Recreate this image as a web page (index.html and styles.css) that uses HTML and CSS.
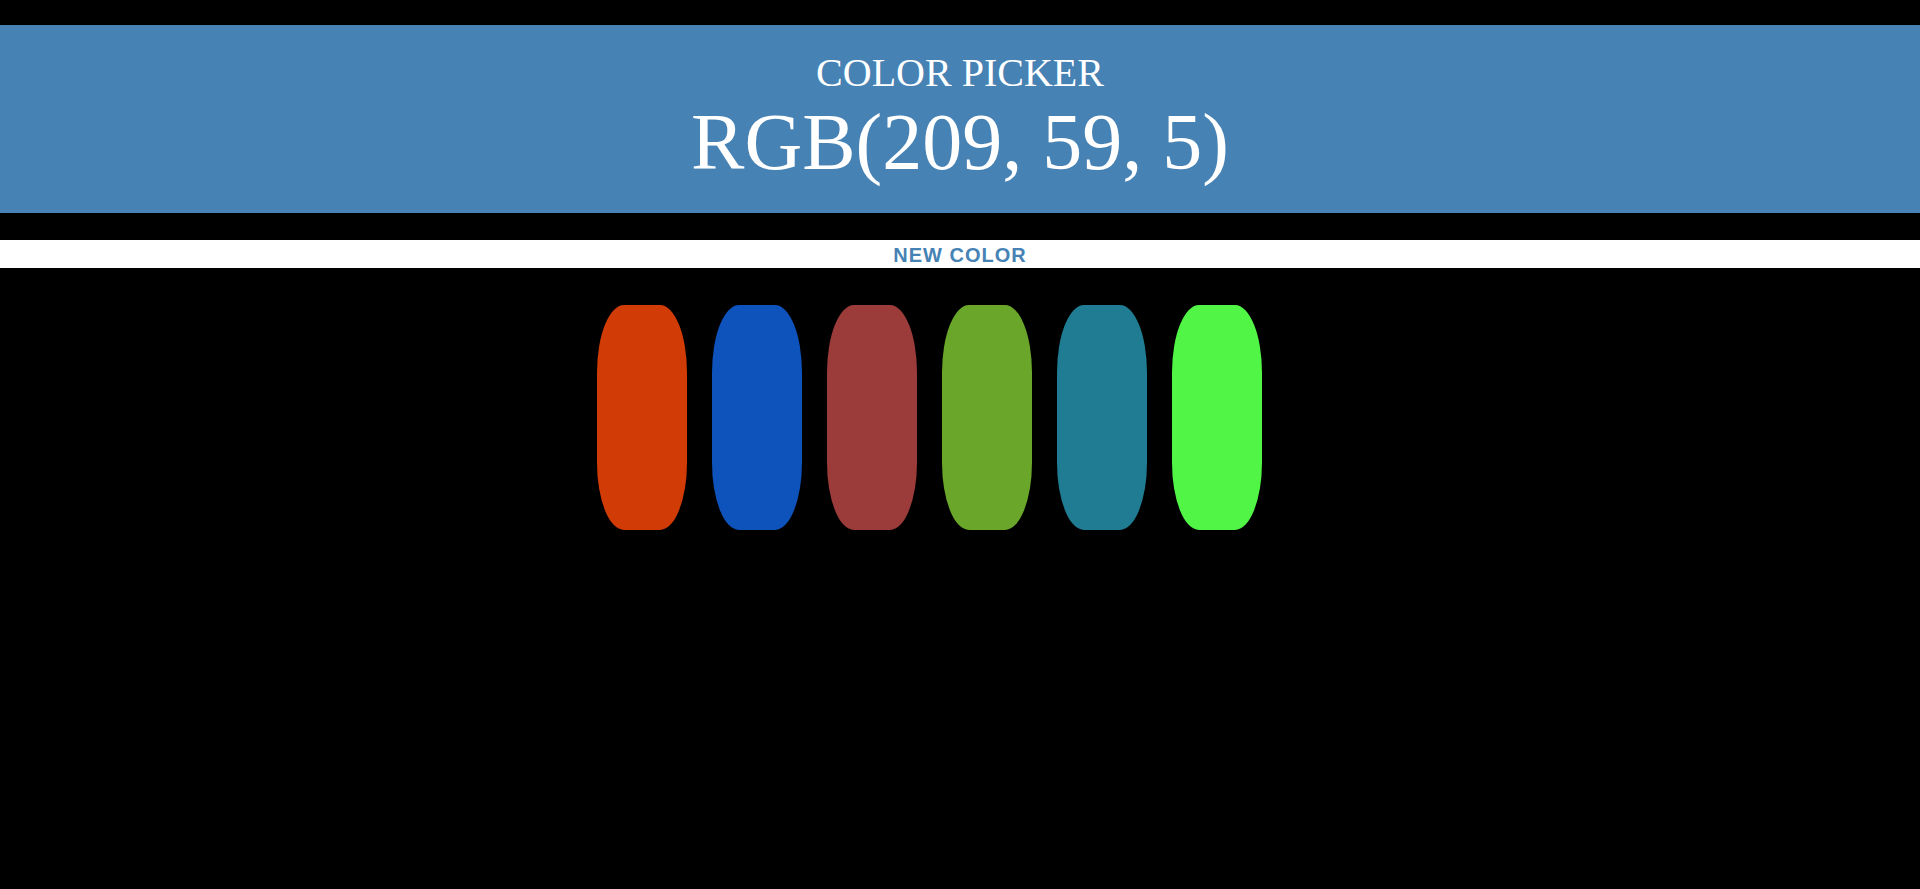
FILE: index.html
```html
<!DOCTYPE html>
<html lang="en">
<head>
    <meta charset="UTF-8">
    <meta name="viewport" content="width=device-width, initial-scale=1.0">
    <title>Color Picker</title>
    <link rel="stylesheet" href="styles.css">
</head>
<body>
    <h1 class="header">
        <span class="title">Color Picker</span>
        <span class="color-display" id="colorDisplay">RGB(209, 59, 5)</span>
    </h1>

    <div class="stripe">
        <button class="reset" id="reset">New Color</button>
    </div>

    <div class="container">
        <div class="square" style="background-color: rgb(209, 59, 5);"></div>
        <div class="square" style="background-color: rgb(14, 82, 187);"></div>
        <div class="square" style="background-color: rgb(155, 60, 58);"></div>
        <div class="square" style="background-color: rgb(106, 166, 42);"></div>
        <div class="square" style="background-color: rgb(31, 124, 146);"></div>
        <div class="square" style="background-color: rgb(80, 245, 70);"></div>
    </div>
</body>
</html>
```

FILE: styles.css
```css
body {
    background-color: black;
    margin: 0;
    padding: 0;
}

.header {
    margin: 25px 0 0 0;
    padding: 25px 0;
    background-color: steelblue;
    color: white;
    font-family: "Liberation Serif", "Times New Roman", serif;
    font-weight: normal;
    text-align: center;
    text-transform: uppercase;
}

.title {
    display: block;
    font-size: 40px;
    line-height: 46px;
}

.color-display {
    display: block;
    font-size: 80px;
    line-height: 92px;
}

.stripe {
    margin-top: 27px;
    height: 28px;
    background-color: white;
    text-align: center;
}

.reset {
    border: none;
    background: none;
    height: 28px;
    padding: 2px 0 0 0;
    font-family: "Liberation Sans", Arial, sans-serif;
    font-size: 20px;
    font-weight: bold;
    letter-spacing: 1px;
    text-transform: uppercase;
    color: steelblue;
    cursor: pointer;
    outline: none;
}

.reset:hover {
    color: white;
    background-color: steelblue;
}

.container {
    display: flex;
    gap: 25px;
    width: 780px;
    margin: 37px auto 0 auto;
    padding-left: 27px;
    box-sizing: border-box;
}

.square {
    width: 90px;
    height: 225px;
    border-radius: 30%;
}
```
